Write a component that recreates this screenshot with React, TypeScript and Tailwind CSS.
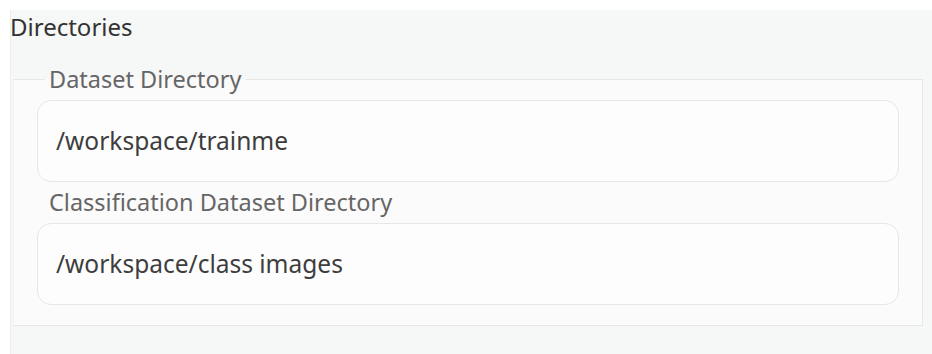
import React from 'react'

function PathField({ value }: { value: string }) {
  return (
    <div className="h-[82px] rounded-[14px] border border-[#e6e7e7] bg-[#fdfdfd] pl-[18px] pr-5 flex items-center text-[24.5px] text-[#3d3d3d]">
      {value}
    </div>
  )
}

export default function App() {
  return (
    <div className="w-[932px] h-[354px] bg-white pt-[10px] font-['Noto_Sans',sans-serif]">
      <div className="h-full ml-[10px] bg-[#f6f7f7] border-l border-[#eceded]">
        {/* Section title */}
        <div className="pt-[2px] text-[24px] leading-[30px] text-[#333] -ml-px">Directories</div>

        {/* Directories group */}
        <fieldset className="mt-[23px] ml-[2px] w-[910px] h-[261px] border border-[#e6e7e7] border-l-[#f0f1f1] bg-[#fbfbfb] px-[23px]">
          <legend className="ml-[8px] px-[4px] text-[23.5px] leading-[28px] text-[#666]">
            Dataset Directory
          </legend>
          <div className="mt-[7px]">
            <PathField value="/workspace/trainme" />
          </div>
          <div className="pl-[12px] pt-[6px] pb-[6px] text-[23.5px] leading-[29px] text-[#666]">
            Classification Dataset Directory
          </div>
          <PathField value="/workspace/class images" />
        </fieldset>
      </div>
    </div>
  )
}
